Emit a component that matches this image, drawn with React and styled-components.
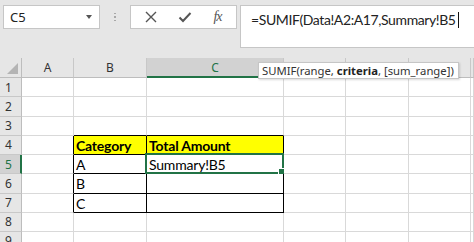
import React from 'react';
import styled, { createGlobalStyle } from 'styled-components';

const GlobalStyle = createGlobalStyle`
  html, body {
    margin: 0;
    padding: 0;
    background: #e6e6e6;
    overflow: hidden;
  }
  * { box-sizing: border-box; }
`;

const Page = styled.div`
  width: 474px;
  height: 242px;
  display: flex;
  flex-direction: column;
  background: #e6e6e6;
  overflow: hidden;
`;

const Toolbar = styled.div`
  height: 58px;
  flex: none;
  display: flex;
  align-items: flex-start;
  padding: 5px 0 0 3px;
`;

const NameBox = styled.div`
  width: 97px;
  height: 24px;
  background: #fff;
  border: 1px solid #c6c6c6;
  display: flex;
  align-items: center;
  justify-content: space-between;
  padding: 0 7px 0 6px;
  font-family: "Noto Sans", "Open Sans", sans-serif;
  font-size: 13px;
  color: #222;
`;

const Caret = styled.span`
  width: 0;
  height: 0;
  border-left: 3.5px solid transparent;
  border-right: 3.5px solid transparent;
  border-top: 4px solid #555;
`;

const Grip = styled.div`
  width: 30px;
  height: 24px;
  display: flex;
  flex-direction: column;
  align-items: center;
  justify-content: center;
  gap: 2px;
  span {
    width: 1.5px;
    height: 1.5px;
    background: #a8a8a8;
  }
`;

const Buttons = styled.div`
  width: 107px;
  height: 24px;
  background: #fff;
  border: 1px solid #c6c6c6;
  display: flex;
  align-items: center;
  justify-content: space-around;
  padding: 0 4px;
`;

const Fx = styled.span`
  font-family: "Liberation Serif", serif;
  font-style: italic;
  font-size: 14px;
  color: #555;
  letter-spacing: -1px;
`;

const FormulaBar = styled.div`
  flex: 1;
  margin-left: 3px;
  margin-right: -3px;
  height: 43px;
  background: #fff;
  border: 1px solid #c6c6c6;
  padding: 5px 0 0 10px;
  font-family: "Lato", "Noto Sans", sans-serif;
  font-size: 14px;
  letter-spacing: -0.4px;
  color: #222;
  display: flex;
  align-items: flex-start;
  white-space: nowrap;
`;

const TextCursor = styled.span`
  display: inline-block;
  width: 1px;
  height: 16px;
  margin-left: 2px;
  margin-top: 1px;
  background: #111;
`;

const Sheet = styled.div`
  position: relative;
  flex: 1;
  display: grid;
  grid-template-columns: 22px 52px 73px 137px 62px 63px 62px 1fr;
  grid-template-rows: 20px repeat(8, 19.25px) 1fr;
  background: #fff;
`;

const Corner = styled.div`
  background: #e6e6e6;
  border-right: 1px solid #bdbdbd;
  border-bottom: 1px solid #bdbdbd;
  position: relative;
  &::after {
    content: '';
    position: absolute;
    right: 3px;
    bottom: 3px;
    width: 0;
    height: 0;
    border-left: 11px solid transparent;
    border-bottom: 11px solid #b4b4b4;
  }
`;

const ColHead = styled.div`
  background: ${p => (p.$active ? '#d2d2d2' : '#e6e6e6')};
  border-right: 1px solid #c8c8c8;
  border-bottom: ${p => (p.$active ? '2px solid #217346' : '1px solid #bdbdbd')};
  display: flex;
  align-items: center;
  justify-content: center;
  overflow: hidden;
  font-family: "Noto Sans", "Open Sans", sans-serif;
  font-size: 12px;
  color: ${p => (p.$active ? '#217346' : '#333')};
  padding-top: ${p => (p.$active ? '1px' : '0')};
`;

const RowHead = styled.div`
  background: ${p => (p.$active ? '#d2d2d2' : '#e6e6e6')};
  border-right: ${p => (p.$active ? '2px solid #217346' : '1px solid #bdbdbd')};
  border-bottom: 1px solid #c8c8c8;
  display: flex;
  align-items: center;
  padding-left: 5px;
  font-family: "Noto Sans", "Open Sans", sans-serif;
  font-size: 12px;
  color: ${p => (p.$active ? '#217346' : '#333')};
`;

const Cell = styled.div`
  position: relative;
  background: ${p => p.$fill || '#fff'};
  border-right: 1px solid ${p => p.$right || '#d9d9d9'};
  border-bottom: 1px solid ${p => p.$bottom || '#d9d9d9'};
  display: flex;
  align-items: center;
  padding: 1px 0 0 2px;
  font-family: "Lato", "Noto Sans", sans-serif;
  font-size: 14px;
  letter-spacing: -0.2px;
  font-weight: ${p => (p.$bold ? 700 : 400)};
  color: #000;
  white-space: nowrap;
`;

const Selection = styled.div`
  position: absolute;
  left: -2px;
  top: -2px;
  right: -1px;
  bottom: -1px;
  border: 2px solid #217346;
  pointer-events: none;
  &::after {
    content: '';
    position: absolute;
    right: -4px;
    bottom: -4px;
    width: 6px;
    height: 6px;
    background: #217346;
    border: 1px solid #fff;
  }
`;

const Tooltip = styled.div`
  position: absolute;
  left: 258px;
  top: 4px;
  height: 17px;
  padding: 0 4px 0 3px;
  background: #fff;
  border: 1px solid #c6c6c6;
  box-shadow: 1px 1px 2px rgba(0, 0, 0, 0.15);
  font-family: "Noto Sans", "Open Sans", sans-serif;
  font-size: 11.3px;
  line-height: 15px;
  color: #333;
  white-space: nowrap;
  b { color: #222; }
`;

const columns = ['A', 'B', 'C', 'D', 'E', 'F', 'G'];

const table = {
  4: { B: { text: 'Category', bold: true, fill: '#ffff00' }, C: { text: 'Total Amount', bold: true, fill: '#ffff00' } },
  5: { B: { text: 'A' }, C: { text: 'Summary!B5', selected: true } },
  6: { B: { text: 'B' }, C: {} },
  7: { B: { text: 'C' }, C: {} },
};

// black outline around the B4:C7 block
const edgeColor = (row, col) => {
  const inTable = table[row] && (col === 'B' || col === 'C');
  const right = inTable || (table[row] && col === 'A') ? '#000' : null;
  const bottom = inTable || (row === 3 && (col === 'B' || col === 'C')) ? '#000' : null;
  return { right, bottom };
};

const XIcon = () => (
  <svg width="12" height="12" viewBox="0 0 12 12">
    <path d="M1 1 L11 11 M11 1 L1 11" stroke="#555" strokeWidth="1.4" fill="none" />
  </svg>
);

const CheckIcon = () => (
  <svg width="14" height="12" viewBox="0 0 14 12">
    <path d="M1.5 6.5 L5 10 L12.5 2" stroke="#555" strokeWidth="2" fill="none" />
  </svg>
);

export default function App() {
  const rows = [1, 2, 3, 4, 5, 6, 7, 8, 9];

  return (
    <Page>
      <GlobalStyle />
      <Toolbar>
        <NameBox>
          C5
          <Caret />
        </NameBox>
        <Grip>
          <span /><span /><span />
        </Grip>
        <Buttons>
          <XIcon />
          <CheckIcon />
          <Fx>fx</Fx>
        </Buttons>
        <FormulaBar>
          =SUMIF(Data!A2:A17,Summary!B5
          <TextCursor />
        </FormulaBar>
      </Toolbar>

      <Sheet>
        <Corner />
        {columns.map((c, i) => (
          <ColHead key={i} $active={c === 'C'}>{c === 'G' ? '' : c}</ColHead>
        ))}

        {rows.map(r => (
          <React.Fragment key={r}>
            <RowHead $active={r === 5}>{r}</RowHead>
            {columns.map((c, i) => {
              const data = (table[r] && table[r][c]) || {};
              const edge = edgeColor(r, c);
              return (
                <Cell
                  key={i}
                  $fill={data.fill}
                  $bold={data.bold}
                  $right={edge.right}
                  $bottom={edge.bottom}
                >
                  {data.text}
                  {data.selected && <Selection />}
                </Cell>
              );
            })}
          </React.Fragment>
        ))}

        <Tooltip>
          SUMIF(range, <b>criteria</b>, [sum_range])
        </Tooltip>
      </Sheet>
    </Page>
  );
}
